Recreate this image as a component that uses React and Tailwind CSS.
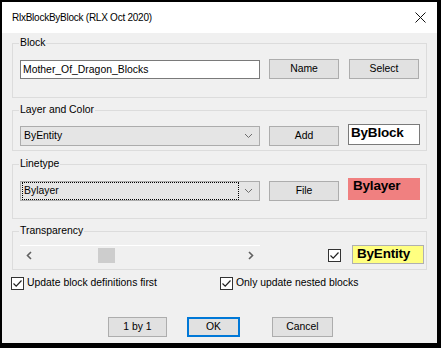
import React from "react";

const font = { fontFamily: '"Liberation Sans", Arial, sans-serif' };

function Btn({ children, className = "" }) {
  return (
    <div
      className={
        "flex items-center justify-center h-[20px] border border-[#adadad] bg-[#e1e1e1] text-[10.4px] text-black " +
        className
      }
    >
      {children}
    </div>
  );
}

function Group({ label, className = "", children }) {
  return (
    <div className={"relative mx-[10px] border border-[#dcdcdc] " + className}>
      <span className="absolute left-[6px] top-[-8px] bg-[#f0f0f0] px-[1px] text-[10.4px] leading-[14px] text-black">
        {label}
      </span>
      {children}
    </div>
  );
}

function Chevron() {
  return (
    <svg width="9" height="6" viewBox="0 0 9 6" className="shrink-0">
      <path d="M1 1 L4.5 4.5 L8 1" fill="none" stroke="#6d6d6d" strokeWidth="1" />
    </svg>
  );
}

function Combo({ value, focused }) {
  return (
    <div className="flex items-center h-[20px] w-[240px] border border-[#acacac] bg-[#e5e5e5] pl-[1px] pr-[6px]">
      <div
        className={
          "flex-1 h-[18px] flex items-center pl-[1px] text-[10.4px] " +
          (focused ? "border border-dotted border-black" : "border border-transparent")
        }
      >
        {value}
      </div>
      <div className="w-[14px] flex justify-end">
        <Chevron />
      </div>
    </div>
  );
}

function Check({ className = "" }) {
  return (
    <div className={"w-[13px] h-[13px] border border-[#333] bg-white flex items-center justify-center shrink-0 " + className}>
      <svg width="11" height="11" viewBox="0 0 11 11">
        <path d="M1.5 5.5 L4.2 8.2 L9.5 2.5" fill="none" stroke="#222" strokeWidth="1.2" />
      </svg>
    </div>
  );
}

export default function App() {
  return (
    <div className="w-[441px] h-[348px] bg-black pt-[2px] pl-[2px] pr-[4px] pb-[5px]" style={font}>
      <div className="flex flex-col h-full bg-[#f0f0f0] text-black">
        {/* title bar */}
        <div className="h-[31px] bg-white flex items-center justify-between pl-[10px] pr-[11px] shrink-0">
          <span className="text-[10px] tracking-[-0.25px]">RlxBlockByBlock (RLX Oct 2020)</span>
          <svg width="11" height="11" viewBox="0 0 11 11">
            <path d="M0.5 0.5 L10.5 10.5 M10.5 0.5 L0.5 10.5" stroke="#111" strokeWidth="1" />
          </svg>
        </div>

        {/* Block */}
        <Group label="Block" className="mt-[10px] h-[55px] pt-[15px] pl-[7px]">
          <div className="flex items-start">
            <div className="w-[240px] h-[19px] mt-[1px] border border-[#7a7a7a] bg-white text-[10.4px] flex items-center pl-[2px]">
              Mother_Of_Dragon_Blocks
            </div>
            <Btn className="ml-[9px] w-[70px]">Name</Btn>
            <Btn className="ml-[10px] w-[70px]">Select</Btn>
          </div>
        </Group>

        {/* Layer and Color */}
        <Group label="Layer and Color" className="mt-[12px] h-[41px] pt-[15px] pl-[7px]">
          <div className="flex items-start">
            <Combo value="ByEntity" />
            <Btn className="ml-[9px] w-[70px]">Add</Btn>
            <div className="ml-[9px] -mt-[2px] w-[72px] h-[21px] border border-[#7a7a7a] bg-white pl-[2px] text-[13.5px] tracking-[-0.2px] font-bold leading-[16px]">
              ByBlock
            </div>
          </div>
        </Group>

        {/* Linetype */}
        <Group label="Linetype" className="mt-[13px] h-[55px] pt-[16px] pl-[7px]">
          <div className="flex items-start">
            <Combo value="Bylayer" focused />
            <Btn className="ml-[9px] w-[70px]">File</Btn>
            <div className="ml-[9px] -mt-[3px] w-[72px] h-[22px] bg-[#f08080] pl-[5px] text-[13.5px] tracking-[-0.2px] font-bold leading-[16px]">
              Bylayer
            </div>
          </div>
        </Group>

        {/* Transparency */}
        <Group label="Transparency" className="mt-[12px] h-[39px] pt-[13px] pl-[7px]">
          <div className="flex items-start">
            <div className="relative w-[240px] h-[19px] border-t border-white bg-[#f0f0f0] flex items-center">
              <svg width="6" height="9" viewBox="0 0 6 9" className="ml-[6px]">
                <path d="M5 1 L1.5 4.5 L5 8" fill="none" stroke="#606060" strokeWidth="1.6" />
              </svg>
              <div className="ml-[66px] w-[17px] h-[15px] bg-[#cdcdcd]" />
              <div className="flex-1" />
              <svg width="6" height="9" viewBox="0 0 6 9" className="mr-[6px]">
                <path d="M1 1 L4.5 4.5 L1 8" fill="none" stroke="#606060" strokeWidth="1.6" />
              </svg>
            </div>
            <Check className="ml-[68px] mt-[4px]" />
            <div className="ml-[11px] w-[72px] h-[19px] border border-[#b0b0b0] bg-[#ffff80] pl-[4px] text-[13.5px] tracking-[-0.2px] font-bold leading-[15px]">
              ByEntity
            </div>
          </div>
        </Group>

        {/* checkboxes */}
        <div className="mt-[6px] flex items-center text-[10.4px] h-[14px]">
          <div className="ml-[9px] w-[209px] flex items-center">
            <Check />
            <span className="ml-[3px]">Update block definitions first</span>
          </div>
          <Check />
          <span className="ml-[3px]">Only update nested blocks</span>
        </div>

        {/* buttons */}
        <div className="mt-[27px] flex items-center">
          <Btn className="ml-[106px] w-[59px] h-[20px]">1 by 1</Btn>
          <div className="ml-[20px] w-[53px] h-[20px] border-2 border-[#0078d7] bg-[#e1e1e1] flex items-center justify-center text-[10.4px]">
            OK
          </div>
          <Btn className="ml-[32px] w-[61px] h-[20px]">Cancel</Btn>
        </div>
      </div>
    </div>
  );
}
